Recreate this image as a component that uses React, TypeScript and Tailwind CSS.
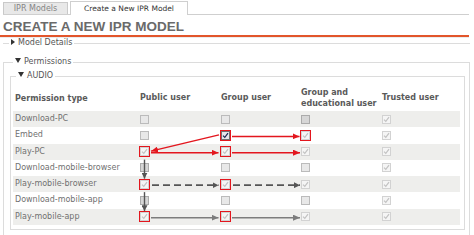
import React from 'react'

type Box = 'off' | 'offDark' | 'on' | 'onActive'

const COLS = ['Public user', 'Group user', 'Group and educational user', 'Trusted user']

// [state, highlighted] per column
const ROWS: { label: string; boxes: [Box, boolean][] }[] = [
  { label: 'Download-PC', boxes: [['off', false], ['off', false], ['offDark', false], ['on', false]] },
  { label: 'Embed', boxes: [['off', false], ['onActive', true], ['on', true], ['on', false]] },
  { label: 'Play-PC', boxes: [['on', true], ['on', true], ['on', false], ['on', false]] },
  { label: 'Download-mobile-browser', boxes: [['offDark', false], ['off', false], ['off', false], ['on', false]] },
  { label: 'Play-mobile-browser', boxes: [['on', true], ['on', true], ['on', false], ['on', false]] },
  { label: 'Download-mobile-app', boxes: [['offDark', false], ['off', false], ['off', false], ['on', false]] },
  { label: 'Play-mobile-app', boxes: [['on', true], ['on', true], ['on', false], ['on', false]] },
]

function Tri({ open }: { open?: boolean }) {
  return open ? (
    <svg width="6" height="5" viewBox="0 0 6 5" className="inline-block mr-[3px] align-[1px]">
      <path d="M0 0 L6 0 L3 5 Z" fill="#333" />
    </svg>
  ) : (
    <svg width="4" height="6" viewBox="0 0 4 6" className="inline-block mr-[3px] align-[0px]">
      <path d="M0 0 L4 3 L0 6 Z" fill="#333" />
    </svg>
  )
}

function Check({ state, mark }: { state: Box; mark: boolean }) {
  const base = 'relative block w-[9px] h-[9px] border'
  const look =
    state === 'off'
      ? 'border-[#bbbbbb] bg-[#e8e8e8]'
      : state === 'offDark'
        ? 'border-[#ababab] bg-[#d6d6d6]'
        : state === 'onActive'
          ? 'border-[#707070] bg-[#e6e6ec]'
          : 'border-[#d2d2d2] bg-[#f5f5f5]'
  const ring = mark ? ' outline-[length:1.5px] outline-solid outline-[#e3161e] outline-offset-[0.5px]' : ''
  return (
    <span className={base + ' ' + look + ring}>
      {(state === 'on' || state === 'onActive') && (
        <svg viewBox="0 0 7 7" className="absolute inset-0 w-[7px] h-[7px]">
          <path
            d="M1 3.6 L2.8 5.4 L6 1.2"
            fill="none"
            stroke={state === 'onActive' ? '#1d2650' : '#c2c2c2'}
            strokeWidth="1.2"
          />
        </svg>
      )}
    </span>
  )
}

function Arrows() {
  const y = (i: number) => 112 + 16.25 * i + 8.125
  const pub = 144.5
  return (
    <svg width="474" height="235" className="absolute left-0 top-0 pointer-events-none">
      <defs>
        <marker id="hr" markerUnits="userSpaceOnUse" markerWidth="7" markerHeight="6" refX="7" refY="3" orient="auto">
          <path d="M0 0 L7 3 L0 6 Z" fill="#e3161e" />
        </marker>
        <marker id="hd" markerUnits="userSpaceOnUse" markerWidth="6" markerHeight="6" refX="6" refY="3" orient="auto">
          <path d="M0 0 L6 3 L0 6 Z" fill="#555" />
        </marker>
        <marker id="hg" markerUnits="userSpaceOnUse" markerWidth="7" markerHeight="6" refX="7" refY="3" orient="auto">
          <path d="M0 0 L7 3 L0 6 Z" fill="#7c7c7c" />
        </marker>
      </defs>
      {/* red: embed + play-pc */}
      <g stroke="#e3161e" strokeWidth="1.5" fill="none">
        <line x1="232" y1={y(1)} x2="299.5" y2={y(1)} markerEnd="url(#hr)" />
        <line x1="219" y1={y(1) - 1.5} x2="151" y2={y(2) - 1.5} markerEnd="url(#hr)" />
        <line x1="151" y1={y(2)} x2="218.5" y2={y(2)} markerEnd="url(#hr)" />
        <line x1="232" y1={y(2)} x2="300" y2={y(2)} markerEnd="url(#hr)" />
      </g>
      {/* dark grey: verticals + dashed browser row */}
      <g stroke="#555" strokeWidth="1.4" fill="none">
        <line x1={pub} y1={y(2) + 7} x2={pub} y2={y(4) - 6.5} markerEnd="url(#hd)" />
        <line x1={pub} y1={y(4) + 7} x2={pub} y2={y(6) - 6.5} markerEnd="url(#hd)" />
        <line x1="152" y1={y(4)} x2="218.5" y2={y(4)} strokeWidth="1.6" strokeDasharray="7 4" markerEnd="url(#hd)" />
        <line x1="233" y1={y(4)} x2="300" y2={y(4)} strokeWidth="1.6" strokeDasharray="7 4" markerEnd="url(#hd)" />
      </g>
      {/* light grey: mobile app row */}
      <g stroke="#7c7c7c" strokeWidth="1.5" fill="none">
        <line x1="151" y1={y(6)} x2="218.5" y2={y(6)} markerEnd="url(#hg)" />
        <line x1="232" y1={y(6)} x2="300" y2={y(6)} markerEnd="url(#hg)" />
      </g>
    </svg>
  )
}

export default function App() {
  return (
    <div className="relative w-[474px] h-[235px] overflow-hidden bg-white font-['DejaVu_Sans',sans-serif] text-[8px] text-[#666]">
      {/* tabs */}
      <div className="flex h-[15px] items-end pl-[3px] pr-[5px]">
        <div className="flex items-end w-full border-b border-[#cfcfcf] h-full">
          <div className="flex h-[12px] w-[65px] items-center justify-center border border-b-0 border-[#c9c9c9] bg-[#e8e8e8] text-[#858585]">
            IPR Models
          </div>
          <div className="ml-[2px] -mb-px flex h-[14px] w-[118px] items-center justify-center border border-b-0 border-[#cfcfcf] bg-white text-[7.5px] text-[#333]">
            Create a New IPR Model
          </div>
        </div>
      </div>

      {/* title */}
      <div className="mr-[5px] border-b-2 border-[#e2552b]">
        <h1 className="h-[20px] pl-[3px] font-['Liberation_Sans',Arial,sans-serif] text-[13.5px] font-bold leading-[24px] text-[#6a6a6a]">
          CREATE A NEW IPR MODEL
        </h1>
      </div>
      <div className="mr-[5px] h-px bg-[#ececec]" />

      {/* model details (collapsed) */}
      <fieldset className="ml-[3px] mr-[4px] border-t border-[#dcdcdc]">
        <legend className="ml-[6px] px-[2px] leading-[10px] text-[#555]">
          <Tri />
          Model Details
        </legend>
      </fieldset>

      {/* permissions */}
      <fieldset className="ml-[3px] mr-[4px] mt-[9px] border border-b-0 border-[#dcdcdc] pl-[6px] pr-[4px] h-[200px]">
        <legend className="ml-[3px] px-[2px] leading-[10px] text-[#555]">
          <Tri open />
          Permissions
        </legend>

        <fieldset className="mt-[4px] border border-[#dcdcdc] pl-[2px] pr-[3px] pt-[5px] pb-[4px]">
          <legend className="ml-[3px] px-[2px] leading-[10px] text-[#555]">
            <Tri open />
            AUDIO
          </legend>

          <div className="grid grid-cols-[127px_81px_80px_81px_78px]">
            <div className="flex h-[25px] items-center pl-[2px] font-bold text-[#5a5a5a]">Permission type</div>
            {COLS.map((c) => (
              <div key={c} className="flex h-[25px] items-center font-bold leading-[10.5px] text-[#5a5a5a]">
                {c === 'Group and educational user' ? (
                  <span>
                    Group and
                    <br />
                    educational user
                  </span>
                ) : (
                  c
                )}
              </div>
            ))}

            {ROWS.map((r, i) => {
              const shade = i % 2 === 0 ? 'bg-[#eeeeec]' : ''
              return (
                <React.Fragment key={r.label}>
                  <div className={'flex h-[16.25px] items-center pl-[2px] text-[#707070] ' + shade}>{r.label}</div>
                  {r.boxes.map(([s, m], j) => (
                    <div key={j} className={'flex h-[16.25px] items-center ' + shade}>
                      <Check state={s} mark={m} />
                    </div>
                  ))}
                </React.Fragment>
              )
            })}
          </div>
        </fieldset>
      </fieldset>

      <Arrows />
    </div>
  )
}
